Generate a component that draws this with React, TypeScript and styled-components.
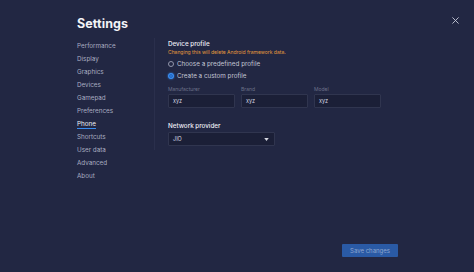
import { FC } from 'react';
import styled, { createGlobalStyle } from 'styled-components';

const Global = createGlobalStyle`
  html, body { margin: 0; padding: 0; background: #222743; }
  body { font-family: Inter, 'Noto Sans', sans-serif; }
  * { box-sizing: border-box; }
`;

const menu = [
  'Performance',
  'Display',
  'Graphics',
  'Devices',
  'Gamepad',
  'Preferences',
  'Phone',
  'Shortcuts',
  'User data',
  'Advanced',
  'About',
];

const App: FC = () => {
  return (
    <>
      <Global />
      <Page>
        <Close>
          <svg viewBox="0 0 10 10" width="7" height="7">
            <path d="M1 1L9 9M9 1L1 9" stroke="#c7cad8" strokeWidth="1.3" strokeLinecap="round" />
          </svg>
        </Close>
        <Title>Settings</Title>
        <Body>
          <Sidebar>
            {menu.map((m) => (
              <NavItem key={m} active={m === 'Phone'}>
                {m}
              </NavItem>
            ))}
          </Sidebar>
          <Content>
            <Heading>Device profile</Heading>
            <Warning>Changing this will delete Android framework data.</Warning>
            <Radios>
              <RadioRow>
                <Radio />
                Choose a predefined profile
              </RadioRow>
              <RadioRow>
                <Radio checked />
                Create a custom profile
              </RadioRow>
            </Radios>
            <Fields>
              <Field>
                <Label>Manufacturer</Label>
                <Input>xyz</Input>
              </Field>
              <Field>
                <Label>Brand</Label>
                <Input>xyz</Input>
              </Field>
              <Field>
                <Label>Model</Label>
                <Input>xyz</Input>
              </Field>
            </Fields>
            <Heading>Network provider</Heading>
            <Select>
              JIO
              <svg viewBox="0 0 6 4" width="5" height="3">
                <path d="M0 0H6L3 4Z" fill="#d6d8e2" />
              </svg>
            </Select>
          </Content>
        </Body>
        <Footer>
          <SaveButton>Save changes</SaveButton>
        </Footer>
      </Page>
    </>
  );
};

const Page = styled.div`
  width: 474px;
  height: 272px;
  position: relative;
  padding: 16px 0 0 77px;
  display: flex;
  flex-direction: column;
  overflow: hidden;
`;
const Close = styled.div`
  position: absolute;
  right: 15px;
  top: 17px;
  width: 7px;
  height: 7px;
  display: flex;
  svg {
    display: block;
  }
`;
const Title = styled.h1`
  margin: 0;
  color: #f2f3f7;
  font-size: 12.5px;
  font-weight: 700;
  line-height: 15px;
  letter-spacing: 0.1px;
`;
const Body = styled.div`
  display: flex;
  margin-top: 7px;
`;
const Sidebar = styled.nav`
  width: 78px;
  padding-top: 2px;
  border-right: 1px solid #2a2f4c;
  display: flex;
  flex-direction: column;
  height: 112px;
`;
const NavItem = styled.div<{ active?: boolean }>`
  font-size: 6.3px;
  line-height: 13px;
  height: 13px;
  color: ${(p) => (p.active ? '#eef0f6' : '#a9adc1')};
  align-self: flex-start;
  position: relative;
  &::after {
    content: '';
    display: ${(p) => (p.active ? 'block' : 'none')};
    position: absolute;
    left: 0;
    right: 0;
    bottom: 2px;
    height: 1px;
    background: #3a8df0;
  }
`;
const Content = styled.section`
  padding: 2px 0 0 13px;
  display: flex;
  flex-direction: column;
`;
const Heading = styled.div`
  color: #eceef5;
  font-size: 6.3px;
  font-weight: 500;
  line-height: 9px;
`;
const Warning = styled.div`
  color: #e59a3c;
  font-size: 5px;
  line-height: 7px;
`;
const Radios = styled.div`
  display: flex;
  flex-direction: column;
  gap: 4px;
  margin-top: 4px;
`;
const RadioRow = styled.div`
  display: flex;
  align-items: center;
  gap: 3px;
  color: #c3c6d4;
  font-size: 6.3px;
  line-height: 8px;
`;
const Radio = styled.span<{ checked?: boolean }>`
  width: 6px;
  height: 6px;
  border-radius: 50%;
  border: 1px solid ${(p) => (p.checked ? '#3a8df0' : '#9296ab')};
  background: ${(p) => (p.checked ? '#3a8df0' : 'transparent')};
  box-shadow: ${(p) => (p.checked ? 'inset 0 0 0 1.2px #1f5fb8, 0 0 2px #3a8df0' : 'none')};
`;
const Fields = styled.div`
  display: grid;
  grid-template-columns: 67px 67px 67px;
  column-gap: 6px;
  margin-top: 6px;
  margin-bottom: 14px;
`;
const Field = styled.div`
  display: flex;
  flex-direction: column;
`;
const Label = styled.div`
  color: #6c7088;
  font-size: 5px;
  line-height: 7px;
  margin-bottom: 1px;
`;
const Input = styled.div`
  height: 14px;
  border: 1px solid #30354f;
  background: #1b1f37;
  border-radius: 1px;
  color: #d4d6e0;
  font-size: 5.5px;
  line-height: 12px;
  padding-left: 4px;
`;
const Select = styled.div`
  margin-top: 1px;
  width: 107px;
  height: 14px;
  border: 1px solid #30354f;
  background: #1b1f37;
  border-radius: 1px;
  color: #d4d6e0;
  font-size: 5.5px;
  padding: 0 5px 0 4px;
  display: flex;
  align-items: center;
  justify-content: space-between;
`;
const Footer = styled.footer`
  margin-top: auto;
  display: flex;
  justify-content: flex-end;
  padding: 0 76px 15px 0;
`;
const SaveButton = styled.div`
  width: 56px;
  height: 13px;
  background: #2a5aa5;
  border-radius: 1px;
  color: #8ea5cf;
  font-size: 6px;
  display: flex;
  align-items: center;
  justify-content: center;
`;

export default App;
